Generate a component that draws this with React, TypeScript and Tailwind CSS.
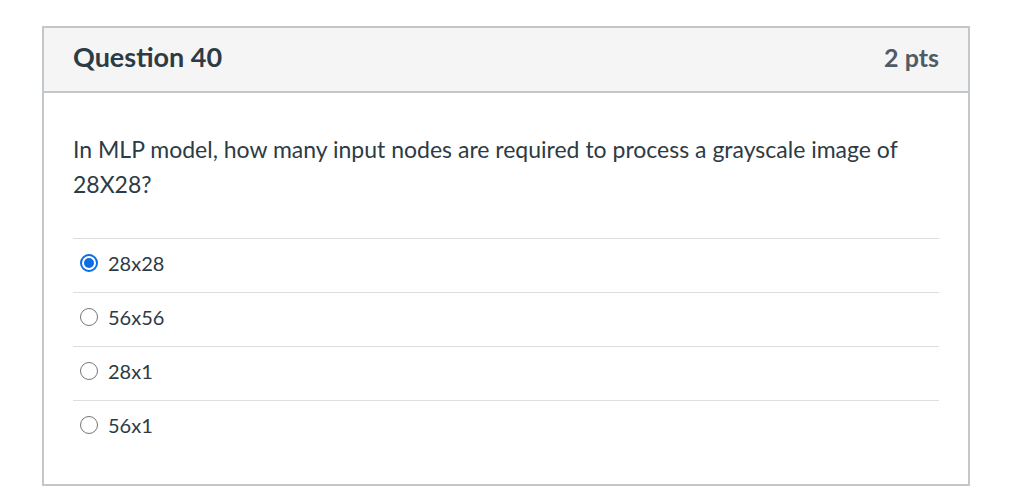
import { useState } from "react";

const answers = ["28x28", "56x56", "28x1", "56x1"];

export default function App() {
  const [selected, setSelected] = useState(0);

  return (
    <div className="min-h-screen bg-white pl-[42px] pt-[26px] font-['Lato','Liberation_Sans',sans-serif]">
      <div className="w-[928px] border-2 border-[#c2c7cb]">
        <div className="flex h-[65px] items-center justify-between border-b-2 border-[#c2c7cb] bg-[#f5f5f5] px-[29px] pb-[4px]">
          <h2 className="text-[27px] font-bold text-[#2d3b45]">Question 40</h2>
          <span className="text-[25px] font-bold text-[#4f5b66]">2 pts</span>
        </div>

        <div className="px-[29px] pb-[30px] pt-[39px]">
          <p className="text-[23px] leading-[35px] text-[#2d3b45]">
            In MLP model, how many input nodes are required to process a grayscale image of 28X28?
          </p>

          <ul className="mt-[36px]">
            {answers.map((answer, i) => (
              <li key={answer} className="border-t border-[#dcdfe1]">
                <label className="flex h-[53px] cursor-pointer items-center gap-[10px] pb-[5px] pl-[7px]">
                  <span
                    className={`flex h-[18px] w-[18px] items-center justify-center rounded-full border ${
                      i === selected ? "border-[#0b6ee5] border-2" : "border-[#767676]"
                    }`}
                  >
                    {i === selected ? <span className="h-[10px] w-[10px] rounded-full bg-[#0b6ee5]" /> : null}
                  </span>
                  <input
                    type="radio"
                    name="q40"
                    className="sr-only"
                    checked={i === selected}
                    onChange={() => setSelected(i)}
                  />
                  <span className="text-[20px] text-[#2d3b45]">{answer}</span>
                </label>
              </li>
            ))}
          </ul>
        </div>
      </div>
    </div>
  );
}
